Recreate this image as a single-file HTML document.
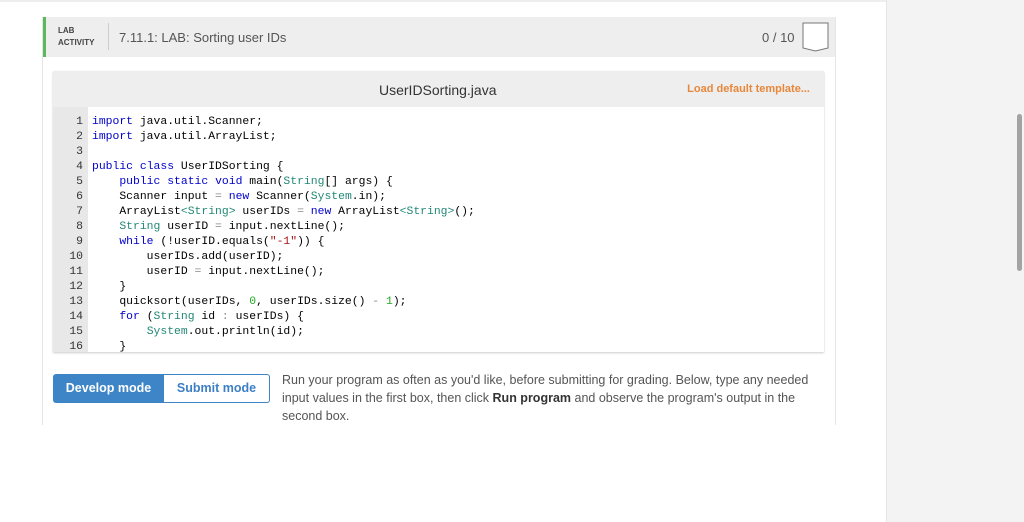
<!DOCTYPE html>
<html><head><style>
body{margin:0;width:1024px;height:522px;background:#fff;font-family:"Liberation Sans",sans-serif;position:relative;overflow:hidden}
.rp{position:absolute;left:886px;top:0;width:138px;height:522px;background:#f3f3f3;border-left:1px solid #e6e6e6}
.sb{position:absolute;left:1017px;top:114px;width:5px;height:157px;background:#a3a3a3;border-radius:3px}
.card{position:absolute;left:42px;top:17px;width:792px;height:408px;background:#fff;border-right:1px solid #e5e5e5;border-left:1px solid #e5e5e5}
.hdr{position:absolute;left:0;top:0;width:792px;height:40px;background:#eee;border-left:3px solid #5cb85c;box-sizing:border-box}
.lab{position:absolute;left:12px;top:8px;font-size:8px;font-weight:bold;color:#444;line-height:12px}
.sep{position:absolute;left:62px;top:6px;width:1px;height:27px;background:#ccc}
.title{position:absolute;left:73px;top:13px;font-size:13px;color:#555}
.score{position:absolute;left:716px;top:13px;font-size:13px;color:#555}
.ed{position:absolute;left:53px;top:71px;width:771px;height:281px;box-shadow:0 1px 2px #ccc;background:#fff}
.eh{height:36px;background:#eee;position:relative}
.fn{position:absolute;left:326px;top:11px;font-size:14px;color:#333}
.ld{position:absolute;right:14px;top:12px;font-size:11px;font-weight:bold;color:#e8873a}
.code{position:absolute;top:36px;left:0;width:771px;height:245px;overflow:hidden}
.gut{position:absolute;left:0;top:0;width:35px;height:245px;background:#e8e8e8}
pre{margin:0;position:absolute;top:8px;left:0;font-family:"Liberation Mono",monospace;font-size:11.4px;line-height:15px;color:#000}
.n{display:inline-block;width:30px;text-align:right;color:#333;margin-right:9px}
.k{color:#00c}.t{color:#287}.s{color:#a11}.m{color:#2a2}.o{color:#888}
.btn{position:absolute;top:374px;height:29px;line-height:29px;font-size:12.5px;font-weight:bold;text-align:center;box-sizing:border-box}
.d{left:53px;width:111px;background:#3d85c6;color:#fff;border-radius:3px 0 0 3px}
.sbm{left:164px;width:106px;color:#3d7fc6;border:1px solid #3d85c6;border-left:none;border-radius:0 3px 3px 0;line-height:27px}
.txt{position:absolute;left:282px;top:371px;width:540px;font-size:12.5px;line-height:18px;color:#555}
</style></head><body>
<div style="position:absolute;left:0;top:0;width:886px;height:2px;background:#eee"></div>
<div class="rp"></div><div class="sb"></div>
<div class="card">
<div class="hdr"><div class="lab">LAB<br>ACTIVITY</div><div class="sep"></div><div class="title">7.11.1: LAB: Sorting user IDs</div><div class="score">0 / 10</div>
<svg style="position:absolute;left:756px;top:5px" width="28" height="30"><path d="M1 1H26V26L13.5 29L1 26Z" fill="#fff" stroke="#777" stroke-width="1"/></svg></div>
</div>
<div class="ed"><div class="eh"><div class="fn">UserIDSorting.java</div><div class="ld">Load default template...</div></div>
<div class="code"><div class="gut"></div>
<pre><span class="n">1</span><span class="k">import</span> java.util.Scanner;
<span class="n">2</span><span class="k">import</span> java.util.ArrayList;
<span class="n">3</span>
<span class="n">4</span><span class="k">public</span> <span class="k">class</span> UserIDSorting {
<span class="n">5</span>    <span class="k">public</span> <span class="k">static</span> <span class="k">void</span> main(<span class="t">String</span>[] args) {
<span class="n">6</span>    Scanner input <span class="o">=</span> <span class="k">new</span> Scanner(<span class="t">System</span>.in);
<span class="n">7</span>    ArrayList<span class="t">&lt;String&gt;</span> userIDs <span class="o">=</span> <span class="k">new</span> ArrayList<span class="t">&lt;String&gt;</span>();
<span class="n">8</span>    <span class="t">String</span> userID <span class="o">=</span> input.nextLine();
<span class="n">9</span>    <span class="k">while</span> (!userID.equals(<span class="s">"-1"</span>)) {
<span class="n">10</span>        userIDs.add(userID);
<span class="n">11</span>        userID <span class="o">=</span> input.nextLine();
<span class="n">12</span>    }
<span class="n">13</span>    quicksort(userIDs, <span class="m">0</span>, userIDs.size() <span class="o">-</span> <span class="m">1</span>);
<span class="n">14</span>    <span class="k">for</span> (<span class="t">String</span> id <span class="o">:</span> userIDs) {
<span class="n">15</span>        <span class="t">System</span>.out.println(id);
<span class="n">16</span>    }</pre></div></div>
<div class="btn d">Develop mode</div><div class="btn sbm">Submit mode</div>
<div class="txt">Run your program as often as you'd like, before submitting for grading. Below, type any needed input values in the first box, then click <b style="color:#333">Run program</b> and observe the program's output in the second box.</div>
</body></html>
